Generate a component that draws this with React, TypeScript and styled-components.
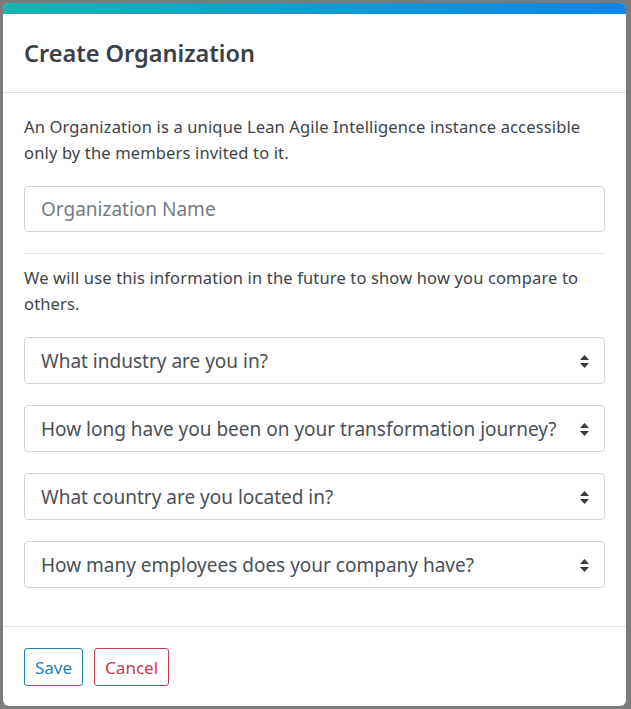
import styled, { createGlobalStyle } from "styled-components";

const GlobalStyle = createGlobalStyle`
  html, body {
    margin: 0;
    padding: 0;
    background: #7b7b7b;
    font-family: "Noto Sans", "Open Sans", sans-serif;
  }
  * {
    box-sizing: border-box;
  }
`;

const Backdrop = styled.div`
  height: 709px;
  padding: 3px 5px 3px 3px;
  background: #7b7b7b;
`;

const Modal = styled.div`
  height: 100%;
  display: flex;
  flex-direction: column;
  background: #fff;
  border-radius: 6px;
  overflow: hidden;
`;

const AccentBar = styled.div`
  height: 11px;
  flex-shrink: 0;
  background: linear-gradient(90deg, #19b3b1 0%, #1098d6 60%, #0d86ea 100%);
`;

const Header = styled.div`
  padding: 24px 21px 24px 21px;
  border-bottom: 1px solid #dee2e6;
`;

const Title = styled.h2`
  margin: 0;
  font-size: 23.5px;
  line-height: 30px;
  font-weight: 600;
  color: #3a4046;
`;

const Body = styled.div`
  flex: 1;
  padding: 21px 21px 1px;
`;

const Lead = styled.p`
  margin: 0 0 20px;
  font-size: 16.5px;
  letter-spacing: 0.15px;
  line-height: 26px;
  color: #3d4449;
`;

const TextInput = styled.input`
  display: block;
  width: 100%;
  height: 46px;
  margin: 0;
  padding: 0 16px;
  border: 1px solid #ced4da;
  border-radius: 4px;
  font-family: inherit;
  font-size: 19px;
  color: #495057;
  background: #fff;

  &::placeholder {
    color: #747b82;
  }
`;

const Divider = styled.hr`
  margin: 21px 0 11px;
  border: 0;
  border-top: 1px solid #dee2e6;
`;

const SelectWrap = styled.div`
  position: relative;
  margin-bottom: 21px;
`;

const Select = styled.select`
  display: block;
  width: 100%;
  height: 47px;
  padding: 0 40px 0 16px;
  border: 1px solid #ced4da;
  border-radius: 4px;
  appearance: none;
  -webkit-appearance: none;
  background: #fff;
  font-family: inherit;
  font-size: 19px;
  color: #495057;
`;

const Caret = styled.svg`
  position: absolute;
  right: 16px;
  top: 50%;
  width: 9px;
  height: 13px;
  margin-top: -6px;
  pointer-events: none;
`;

const Footer = styled.div`
  display: flex;
  gap: 11px;
  padding: 21px 21px 20px;
  border-top: 1px solid #dee2e6;
`;

const Button = styled.button<{ $tone: string }>`
  height: 38px;
  padding: 0 10px;
  border: 1px solid ${({ $tone }) => $tone};
  border-radius: 3px;
  background: #fff;
  color: ${({ $tone }) => $tone};
  font-family: inherit;
  font-size: 17px;
`;

const questions = [
  "What industry are you in?",
  "How long have you been on your transformation journey?",
  "What country are you located in?",
  "How many employees does your company have?",
];

const App = () => {
  return (
    <>
      <GlobalStyle />
      <Backdrop>
        <Modal>
          <AccentBar />
          <Header>
            <Title>Create Organization</Title>
          </Header>
          <Body>
            <Lead>
              An Organization is a unique Lean Agile Intelligence instance accessible only by
              the members invited to it.
            </Lead>
            <TextInput placeholder="Organization Name" />
            <Divider />
            <Lead>
              We will use this information in the future to show how you compare to others.
            </Lead>
            {questions.map((q) => (
              <SelectWrap key={q}>
                <Select defaultValue="">
                  <option value="" disabled>
                    {q}
                  </option>
                </Select>
                <Caret viewBox="0 0 9 13">
                  <path d="M4.5 0 L9 5 H0 Z M4.5 13 L0 8 H9 Z" fill="#343a40" />
                </Caret>
              </SelectWrap>
            ))}
          </Body>
          <Footer>
            <Button $tone="#1f7fb3">Save</Button>
            <Button $tone="#c23b4f">Cancel</Button>
          </Footer>
        </Modal>
      </Backdrop>
    </>
  );
};

export default App;
